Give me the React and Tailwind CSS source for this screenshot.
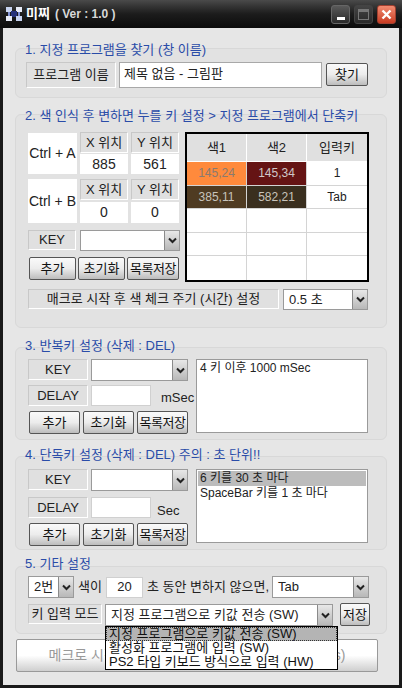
import React from "react";

const FONT = "font-['Liberation_Sans','Noto_Sans_CJK_KR',sans-serif]";

const Label = ({ className, children }) => (
  <div className={`flex items-center justify-center bg-[#e0e0e0] border border-t-[#c8c8c8] border-l-[#c8c8c8] border-b-white border-r-white text-[13px] text-[#222] ${className}`}>
    {children}
  </div>
);

const Field = ({ className, children }) => (
  <div className={`flex items-center justify-center bg-white text-[13px] text-[#222] ${className}`}>{children}</div>
);

const Btn = ({ className, children }) => (
  <button className={`flex shrink-0 items-center justify-center rounded-[2px] border border-[#555] bg-gradient-to-b from-[#fafafa] via-[#ececec] to-[#bcbcbc] text-[13px] text-[#111] ${className}`}>
    {children}
  </button>
);

const Select = ({ className, value }) => (
  <div className={`flex shrink-0 items-center justify-between bg-white border border-[#9a9a9a] text-[13px] text-[#222] ${className}`}>
    <span className="pl-[5px] whitespace-nowrap overflow-hidden">{value}</span>
    <span className="flex h-full w-[15px] shrink-0 items-center justify-center bg-gradient-to-b from-[#e8e8e8] to-[#b8b8b8] border-l border-[#8a8a8a]">
      <svg width="9" height="7" viewBox="0 0 9 7">
        <path d="M1 1.5 L4.5 5 L8 1.5" fill="none" stroke="#222" strokeWidth="2" />
      </svg>
    </span>
  </div>
);

const Section = ({ title, height, className, children }) => (
  <div className="mx-[12px]">
    <h2 className="relative z-10 h-[14px] pl-[10px] text-[13px] leading-[14px] whitespace-nowrap text-[#2a4ca8]">{title}</h2>
    <div className={`rounded-[6px] border border-[#d8d8d8] bg-[#e2e2e2] ${height} ${className}`}>{children}</div>
  </div>
);

const WinBtn = ({ className, children }) => (
  <div className={`flex h-[19px] w-[19px] items-center justify-center rounded-[3px] border ${className}`}>{children}</div>
);

const ListButtons = () => (
  <div className="flex gap-[3px] pl-[1px]">
    <Btn className="h-[23px] w-[51px]">추가</Btn>
    <Btn className="h-[23px] w-[51px]">초기화</Btn>
    <Btn className="h-[23px] w-[51px] text-[12.5px] tracking-[-0.5px]">목록저장</Btn>
  </div>
);

const KeyDelay = ({ unit, unitClass, rowGap }) => (
  <div className="flex w-[168px] shrink-0 flex-col">
    <div className="flex gap-[3px]">
      <Label className="h-[21px] w-[60px]">KEY</Label>
      <Select className="h-[22px] w-[97px]" value="" />
    </div>
    <div className={`flex gap-[3px] ${rowGap}`}>
      <Label className="h-[21px] w-[60px]">DELAY</Label>
      <Field className="h-[21px] w-[60px] border border-[#d0d0d0]" />
      <span className={`self-end whitespace-nowrap text-[13px] text-[#222] ${unitClass}`}>{unit}</span>
    </div>
    <div className="mt-[5px]">
      <ListButtons />
    </div>
  </div>
);

const cell = "flex items-center justify-center border-r border-b border-[#d4d4d4] text-[12px]";
const rows = [
  [["145,24", "bg-[#ff8a3c] text-[#8a7a70]"], ["145,34", "bg-[#651414] text-[#d0c8c8]"], ["1", "bg-white text-[#222]"]],
  [["385,11", "bg-[#4f3b22] text-[#c8c4bc]"], ["582,21", "bg-[#3a2f1f] text-[#c8c4bc]"], ["Tab", "bg-white text-[#222]"]],
  [["", "bg-white"], ["", "bg-white"], ["", "bg-white"]],
  [["", "bg-white"], ["", "bg-white"], ["", "bg-white"]],
  [["", "bg-white"], ["", "bg-white"], ["", "bg-white"]],
];

export default function App() {
  return (
    <div className={`${FONT} relative flex h-[688px] w-[402px] flex-col overflow-hidden bg-[#1a1a1a]`}>
      {/* Title bar */}
      <div className="flex h-[28px] shrink-0 items-center bg-gradient-to-b from-[#4a4a4a] via-[#1c1c1c] to-[#0c0c0c] pl-[6px] pr-[6px]">
        <svg width="16" height="16" viewBox="0 0 16 16">
          <rect x="0" y="1" width="6" height="5" fill="#c8d4f0" />
          <rect x="10" y="1" width="6" height="5" fill="#e8ecf8" />
          <rect x="5" y="5" width="6" height="6" fill="#26327a" />
          <rect x="0" y="10" width="6" height="5" fill="#e8ecf8" />
          <rect x="10" y="10" width="6" height="5" fill="#c8d4f0" />
          <rect x="2" y="6" width="2" height="4" fill="#8090d0" />
          <rect x="12" y="6" width="2" height="4" fill="#8090d0" />
        </svg>
        <span className="ml-[4px] text-[13px] font-bold text-white">미찌</span>
        <span className="ml-[5px] text-[12px] font-bold text-[#d8d8d8]">( Ver : 1.0 )</span>
        <div className="ml-auto flex items-center gap-[4px]">
          <WinBtn className="border-[#666] bg-gradient-to-b from-[#5a5a5a] to-[#2a2a2a]">
            <span className="mt-[9px] h-[3px] w-[8px] bg-white" />
          </WinBtn>
          <WinBtn className="border-[#444] bg-gradient-to-b from-[#444] to-[#2a2a2a]">
            <span className="h-[11px] w-[11px] border border-[#777] border-t-[3px]" />
          </WinBtn>
          <WinBtn className="border-[#a04030] bg-gradient-to-b from-[#f08a70] to-[#c83a20]">
            <svg width="11" height="11" viewBox="0 0 11 11">
              <path d="M1.5 1.5 L9.5 9.5 M9.5 1.5 L1.5 9.5" stroke="#fff" strokeWidth="2.4" />
            </svg>
          </WinBtn>
        </div>
      </div>

      {/* Client area */}
      <div className="mx-[3px] mb-[3px] flex flex-1 flex-col bg-[#e6e6e6] pt-[15px]">
        <Section title="1. 지정 프로그램을 찾기 (창 이름)" height="h-[50px] -mt-[9px]" className="flex items-start pl-[10px] pt-[13px]">
          <Label className="h-[26px] w-[90px] border-[#c4c4c4]">프로그램 이름</Label>
          <Field className="ml-[3px] h-[26px] w-[203px] justify-start border border-[#a8a8a8] pl-[4px] pb-[3px]">제목 없음 - 그림판</Field>
          <Btn className="ml-[4px] mt-[1px] h-[23px] w-[42px]">찾기</Btn>
        </Section>

        <div className="mt-[11px]">
          <Section title="2. 색 인식 후 변하면 누를 키 설정 > 지정 프로그램에서 단축키" height="h-[214px] -mt-[9px]" className="pl-[12px] pt-[17px]">
            <div className="flex gap-[5px]">
              <div className="flex w-[152px] flex-col">
                <div className="flex items-start gap-[3px]">
                  <Field className="mt-[1px] h-[41px] w-[49px] text-[14px]">Ctrl + A</Field>
                  <div className="grid grid-cols-2 gap-x-[3px] gap-y-[1px]">
                    <Label className="h-[21px] w-[48px]">X 위치</Label>
                    <Label className="h-[21px] w-[48px]">Y 위치</Label>
                    <Field className="h-[20px] w-[48px] text-[14px]">885</Field>
                    <Field className="h-[20px] w-[48px] text-[14px]">561</Field>
                  </div>
                </div>
                <div className="mt-[5px] flex items-start gap-[3px]">
                  <Field className="h-[44px] w-[49px] text-[14px]">Ctrl + B</Field>
                  <div className="grid grid-cols-2 gap-x-[3px] gap-y-[2px]">
                    <Label className="h-[21px] w-[48px]">X 위치</Label>
                    <Label className="h-[21px] w-[48px]">Y 위치</Label>
                    <Field className="h-[21px] w-[48px] text-[14px]">0</Field>
                    <Field className="h-[21px] w-[48px] text-[14px]">0</Field>
                  </div>
                </div>
                <div className="mt-[7px] flex gap-[4px]">
                  <Label className="h-[20px] w-[48px]">KEY</Label>
                  <Select className="h-[21px] w-[100px]" value="" />
                </div>
                <div className="mt-[6px] flex gap-[2px] pl-[1px]">
                  <Btn className="h-[23px] w-[47px]">추가</Btn>
                  <Btn className="h-[23px] w-[47px]">초기화</Btn>
                  <Btn className="h-[23px] w-[52px] tracking-[-0.5px]">목록저장</Btn>
                </div>
              </div>

              <div className="h-[150px] w-[184px] border-2 border-black bg-white">
                <div className="grid h-full grid-cols-[60px_60px_60px] grid-rows-[28px_repeat(5,1fr)]">
                  <div className={`${cell} bg-[#e0e0e0] text-[13px] text-[#222] border-b-white border-r-white`}>색1</div>
                  <div className={`${cell} bg-[#e0e0e0] text-[13px] text-[#222] border-b-white border-r-white`}>색2</div>
                  <div className={`${cell} bg-[#e0e0e0] text-[13px] text-[#222] border-b-white border-r-0`}>입력키</div>
                  {rows.map((row, i) =>
                    row.map(([text, color], j) => (
                      <div key={`${i}-${j}`} className={`${cell} ${j === 2 ? "border-r-0" : ""} ${i === 4 ? "border-b-0" : ""} ${color}`}>{text}</div>
                    ))
                  )}
                </div>
              </div>
            </div>

            <div className="mt-[7px] flex gap-[4px]">
              <Label className="h-[20px] w-[251px]">매크로 시작 후 색 체크 주기 (시간) 설정</Label>
              <Select className="h-[21px] w-[85px]" value="0.5 초" />
            </div>
          </Section>
        </div>

        <div className="mt-[11px]">
          <Section title="3. 반복키 설정 (삭제 : DEL)" height="h-[93px] -mt-[6px]" className="flex pl-[12px] pt-[11px]">
            <KeyDelay unit="mSec" unitClass="ml-[7px] -mb-[1px]" rowGap="mt-[4px]" />
            <div className="h-[74px] w-[172px] border border-[#9a9a9a] bg-white pl-[3px] pt-[1px] text-[12px] leading-[15px] text-[#222]">
              4 키 이후 1000 mSec
            </div>
          </Section>
        </div>

        <div className="mt-[8px]">
          <Section title="4. 단독키 설정 (삭제 : DEL) 주의 : 초 단위!!" height="h-[94px] -mt-[6px]" className="flex pl-[12px] pt-[12px]">
            <KeyDelay unit="Sec" unitClass="ml-[3px] -mb-[2px]" rowGap="mt-[6px]" />
            <div className="h-[74px] w-[172px] border border-[#9a9a9a] bg-white p-[1px] text-[12px] leading-[15px] text-[#222]">
              <div className="bg-[#bcbcbc] pl-[2px]">6 키를 30 초 마다</div>
              <div className="pl-[2px]">SpaceBar 키를 1 초 마다</div>
            </div>
          </Section>
        </div>

        <div className="mt-[7px]">
          <Section title="5. 기타 설정" height="h-[68px] -mt-[5px]" className="pl-[12px] pt-[9px]">
            <div className="flex items-center">
              <Select className="h-[22px] w-[46px]" value="2번" />
              <span className="ml-[4px] text-[13px] text-[#222]">색이</span>
              <Field className="ml-[4px] h-[21px] w-[37px] border border-[#d0d0d0]">20</Field>
              <span className="ml-[4px] w-[125px] whitespace-nowrap text-[13px] text-[#222]">초 동안 변하지 않으면,</span>
              <Select className="h-[22px] w-[97px]" value="Tab" />
            </div>
            <div className="mt-[6px] flex items-start">
              <Label className="h-[20px] w-[74px] whitespace-nowrap">키 입력 모드</Label>
              <div className="relative ml-[3px]">
                <Select className="h-[22px] w-[228px]" value="지정 프로그램으로 키값 전송 (SW)" />
                {/* Open dropdown lies over the start button */}
                <div className="absolute left-0 top-full z-20 w-[233px] border border-black bg-white text-[13px] leading-[14px] text-[#111]">
                  <div className="bg-[#b4b4b4] pl-[3px] outline-1 outline-dotted outline-[#333] -outline-offset-1">지정 프로그램으로 키값 전송 (SW)</div>
                  <div className="pl-[3px]">활성화 프로그램에 입력 (SW)</div>
                  <div className="pl-[3px]">PS2 타입 키보드 방식으로 입력 (HW)</div>
                </div>
              </div>
              <Btn className="ml-[7px] -mt-[1px] h-[23px] w-[30px]">저장</Btn>
            </div>
          </Section>
        </div>

        <div className="mx-[13px] mt-[5px]">
          <Btn className="h-[33px] w-[362px] whitespace-nowrap border-[#999] from-white via-white to-[#cfcfcf] text-[14px] text-[#999]">메크로 시작 (단축키 : Alt + Shift + Function Keys)</Btn>
        </div>
      </div>
    </div>
  );
}
